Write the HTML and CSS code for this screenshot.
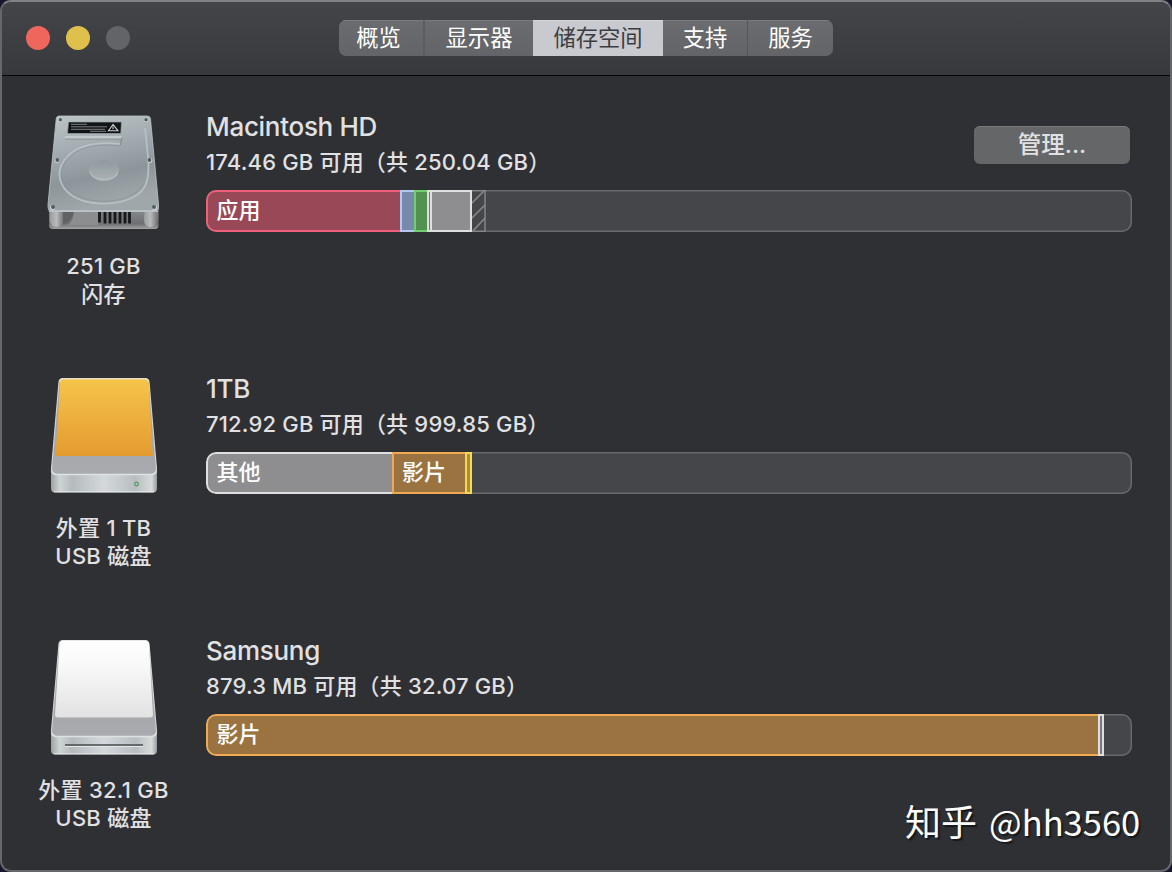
FILE: index.html
```html
<!DOCTYPE html>
<html lang="zh-CN">
<head>
<meta charset="utf-8">
<title>储存空间</title>
<link rel="stylesheet" href="styles.css">
</head>
<body>
<main class="window">
  <header class="titlebar">
    <div class="lights"><i class="light close"></i><i class="light minimize"></i><i class="light zoom"></i></div>
    <nav class="tabs">
      <button class="tab overview">概览</button>
      <button class="tab displays">显示器</button>
      <button class="tab storage active">储存空间</button>
      <button class="tab support">支持</button>
      <button class="tab service">服务</button>
    </nav>
  </header>

  <section class="volume internal">
    <div class="device">
      <svg class="device-icon" viewBox="0 0 130 130" width="130" height="130">
        <defs>
          <linearGradient id="metal" x1="0" y1="0" x2=".25" y2="1"><stop offset="0" stop-color="#bdc5c8"/><stop offset=".35" stop-color="#a5aeb2"/><stop offset=".7" stop-color="#8c969a"/><stop offset="1" stop-color="#a0a7aa"/></linearGradient>
          <linearGradient id="metalFront" x1="0" y1="0" x2="0" y2="1"><stop offset="0" stop-color="#8b8f91"/><stop offset=".75" stop-color="#6d6f71"/><stop offset="1" stop-color="#a1a3a4"/></linearGradient>
          <linearGradient id="post" x1="0" y1="0" x2="1" y2="0"><stop offset="0" stop-color="#9a9d9e"/><stop offset=".5" stop-color="#b8babb"/><stop offset="1" stop-color="#77797b"/></linearGradient>
          <linearGradient id="disc" x1="0" y1="0" x2="0" y2="1"><stop offset="0" stop-color="#8f999d"/><stop offset="1" stop-color="#a8b0b3"/></linearGradient>
        </defs>
        <path d="M9 103H118.500V120Q118.500 124 115 124H13Q9 124 9 120Z" fill="url(#metalFront)"/>
        <path d="M23 107H34Q32 117 23 119Z" fill="#606264"/>
        <path d="M34 107H58V120H28Q34 115 34 107Z" fill="#8b8d8f"/>
        <rect x="10" y="104" width="13" height="18" rx="6" fill="url(#post)"/><rect x="104" y="104" width="13" height="18" rx="6" fill="url(#post)"/>
        <path d="M58 107H91V119H58Z" fill="#747678"/>
        <path d="M59.500 107V117.500M65 107V118.500M70 107V118.500M75 107V118.500M80 107V118.500M85 107V118.500M89.500 107V118.500" stroke="#171819" stroke-width="2.800"/>
        <path d="M19 11Q16.500 11 16.200 14L8 99.500Q7.700 106 11 106.500H115.500Q119.300 106 118.500 99L110.500 14Q110.200 11 107.500 11Z" fill="url(#metal)" stroke="#bcc3c6" stroke-width=".8"/>
        <path d="M8.800 106H118" stroke="#c1c7ca" stroke-width="1.500"/>
        <path d="M81 39C53 36 36 42 27 52C18 61 17 73 24 83C33 95 50 99.500 68 98.500C88 97 101 91 106 79C109 71 109 62 108 52L105 23" fill="none" stroke="#b9c1c4" stroke-width="1.700"/>
        <path d="M80 41C54 38 38 43 29 53C20 62 20 73 26 82C34 92 50 97 68 96C86 95 99 88 104 78" fill="none" stroke="#89949a" stroke-width="1" opacity=".7"/>
        <path d="M82 32L80.500 40" fill="none" stroke="#7c868a"/>
        <path d="M25 31H82L81 34H25Z" fill="#c3cacd"/>
        <path d="M25 34H81" stroke="#7c868a" stroke-width=".8"/>
        <path d="M28.500 17H81.500L80.800 28.500H27.500Z" fill="#111314" stroke="#9aa3a7" stroke-width=".7"/>
        <path d="M31 19.300H47M31 21.800H67M31 24.300H65M50 26.300H66" stroke="#7d8183" stroke-width="1"/>
        <path d="M73 19.500L68.500 25.800H78ZM73 21.500V24.300" fill="none" stroke="#cbd0d2" stroke-width="1.100"/>
        <ellipse cx="64" cy="65.500" rx="14.500" ry="10.300" fill="#b6bec1"/><ellipse cx="64" cy="64.500" rx="14" ry="9.500" fill="url(#disc)"/>
        <g fill="#d2d9dc"><circle cx="20" cy="15" r="2.200"/><circle cx="106" cy="15" r="2.200"/><circle cx="17" cy="55.500" r="2.400"/><circle cx="110" cy="55.500" r="2.400"/><circle cx="12.500" cy="102.500" r="2.500"/><circle cx="114.500" cy="102.500" r="2.500"/></g>
        <g fill="#4d5b61"><circle cx="20.300" cy="14.700" r="1.700"/><circle cx="106" cy="14.700" r="1.700"/><circle cx="17.300" cy="55" r="1.900"/><circle cx="109.500" cy="55" r="1.900"/><circle cx="13" cy="102" r="2"/><circle cx="114" cy="102" r="2"/></g>
      </svg>
      <p class="device-name">251 GB<br>闪存</p>
    </div>
    <div class="details">
      <h2 class="name">Macintosh HD</h2>
      <p class="capacity">174.46 GB 可用（共 250.04 GB）</p>
      <div class="bar">
        <span class="seg apps first" style="width:194px">应用</span><span class="seg mail" style="width:14px"></span><span class="seg messages" style="width:13px"></span><span class="seg photos joined" style="width:3px"></span><span class="seg system" style="width:42px"></span>
        <svg class="purgeable" width="14" height="42" viewBox="0 0 14 42"><path d="M0 13L13 0M0 28L13 15M0 42L13 28" stroke="#838487" stroke-width="1.700"/><path d="M0 .5H14M0 41.500H14M13 0V42" stroke="#858689" stroke-width="1.500"/></svg>
      </div>
    </div>
    <button class="manage">管理...</button>
  </section>

  <section class="volume">
    <div class="device">
      <svg class="device-icon" viewBox="0 0 130 130" width="130" height="130">
        <defs>
          <linearGradient id="orange" x1="0" y1="0" x2="0" y2="1"><stop offset="0" stop-color="#f6c44a"/><stop offset="1" stop-color="#e49b30"/></linearGradient>
          <linearGradient id="topGray" x1="0" y1="0" x2="0" y2="1"><stop offset="0" stop-color="#9b9ea1"/><stop offset="1" stop-color="#a9abae"/></linearGradient>
          <linearGradient id="edge" x1="0" y1="0" x2="1" y2="0"><stop offset="0" stop-color="#9ea2a3"/><stop offset=".08" stop-color="#cfd3d4"/><stop offset=".2" stop-color="#b5bbbd"/><stop offset=".5" stop-color="#d4d8da"/><stop offset=".8" stop-color="#b8bec0"/><stop offset=".95" stop-color="#d7dada"/><stop offset="1" stop-color="#969a9c"/></linearGradient>
        </defs>
        <path d="M11 102H117V118Q117 122.500 113 122.500H15Q11 122.500 11 118Z" fill="url(#edge)"/>
        <path d="M23 8.500Q19.500 8.500 19 12L11.500 99Q11 104.500 16 104.500H112Q117 104.500 116.500 99L109 12Q108.500 8.500 105 8.500Z" fill="url(#topGray)" stroke="#d0d1d1" stroke-width="1.200"/>
        <path d="M23 9H105Q108.300 9 108.600 12L112.700 86H15.500L20 12Q20.200 9 23 9Z" fill="url(#orange)"/>
        <path d="M19.500 12Q20 8.800 23 8.800H105Q108.300 8.800 108.600 12" fill="none" stroke="#eee1c2" stroke-width="1.200"/>
        <path d="M12 101Q13 104.500 17 104.500H111Q115 104.500 116 101" fill="none" stroke="#dfe2e3" stroke-width="1.300"/>
        <path d="M14 121.800H114" stroke="#e6e8e8"/>
        <circle cx="96.500" cy="114" r="1.800" fill="none" stroke="#519b55" stroke-width="1.200"/>
      </svg>
      <p class="device-name">外置 1 TB<br>USB 磁盘</p>
    </div>
    <div class="details">
      <h2 class="name">1TB</h2>
      <p class="capacity">712.92 GB 可用（共 999.85 GB）</p>
      <div class="bar">
        <span class="seg other first" style="width:186px">其他</span><span class="seg movies" style="width:73px">影片</span><span class="seg music" style="width:7px"></span>
      </div>
    </div>
  </section>

  <section class="volume">
    <div class="device">
      <svg class="device-icon" viewBox="0 0 130 130" width="130" height="130">
        <defs><linearGradient id="white" x1="0" y1="0" x2="0" y2="1"><stop offset="0" stop-color="#ffffff"/><stop offset=".3" stop-color="#f9f9f9"/><stop offset="1" stop-color="#e2e2e3"/></linearGradient></defs>
        <path d="M11 102H117V118Q117 122.500 113 122.500H15Q11 122.500 11 118Z" fill="url(#edge)"/>
        <path d="M23 8.500Q19.500 8.500 19 12L11.500 99Q11 104.500 16 104.500H112Q117 104.500 116.500 99L109 12Q108.500 8.500 105 8.500Z" fill="url(#topGray)" stroke="#d0d1d1" stroke-width="1.200"/>
        <path d="M23 8.500H105Q108.700 8.500 109 12L113 83Q113 85.500 110 85.500H18Q15 85.500 15 83L19.500 12Q20 8.500 23 8.500Z" fill="url(#white)"/>
        <path d="M12 101Q13 104.500 17 104.500H111Q115 104.500 116 101" fill="none" stroke="#dfe2e3" stroke-width="1.300"/>
        <path d="M14 121.800H114" stroke="#e6e8e8"/>
        <path d="M25 113H103" stroke="#484b4d" stroke-width="1.600"/><path d="M25 114.500H103" stroke="#e5e7e8"/>
      </svg>
      <p class="device-name">外置 32.1 GB<br>USB 磁盘</p>
    </div>
    <div class="details">
      <h2 class="name">Samsung</h2>
      <p class="capacity">879.3 MB 可用（共 32.07 GB）</p>
      <div class="bar">
        <span class="seg movies first" style="width:892px">影片</span><span class="seg photos" style="width:6px"></span>
      </div>
    </div>
  </section>
  <div class="signature">知乎 <span class="handle">@hh3560</span></div>
</main>
</body>
</html>
```
FILE: styles.css
```css
* { box-sizing: border-box; }
body { margin: 0; background: #17162a; font-family: Inter, "Noto Sans CJK SC", sans-serif; color: #e1e1e3; }
h2, p { margin: 0; }
button { border: 0; padding: 0; font-family: inherit; color: inherit; }
.window { position: relative; width: 1172px; height: 872px; overflow: hidden; border: 2px solid #66676a; border-top-color: #808184; border-radius: 11px; background: #2f3034; }
.titlebar { display: flex; height: 74px; padding: 18px 0 0 24px; border-bottom: 1px solid #050506; background: linear-gradient(#444548, #38393d); }
.lights { display: flex; gap: 16px; width: 313px; padding-top: 6px; }
.light { width: 24px; height: 24px; border-radius: 50%; }
.close { background: #ee665c; }
.minimize { background: #e0c04c; }
.zoom { background: #636467; }
.tabs { display: flex; height: 36px; overflow: hidden; border-radius: 7px; }
.tab { height: 36px; background: linear-gradient(#6b6c6f, #636467); box-shadow: inset 0 1px #7b7c7f; color: #fff; font-size: 22.300px; line-height: 36px; }
.overview { width: 86px; padding-right: 5px; border-right: 2px solid #5b5c5f; }
.displays { width: 108px; }
.storage { width: 130px; }
.support { width: 85px; border-right: 1px solid #56575a; }
.service { width: 85px; }
.tab.active { background: #c9cacf; color: #3c3d41; box-shadow: inset 0 1px #d3d4d8; }
.volume { display: flex; align-items: flex-start; height: 262px; }
.device { width: 204px; padding: 32px 0 0 2px; }
.device-icon { display: block; margin-left: 36px; }
.device-name { width: 199px; text-align: center; font-size: 22px; font-weight: 450; line-height: 28px; letter-spacing: .25px; padding-top: 14px; }
.internal .device { padding-top: 29px; }
.internal .device-name { padding-top: 17px; }
.details { width: 926px; padding-top: 34px; }
.name { height: 34px; font-weight: 450; font-size: 26px; line-height: 34px; letter-spacing: -.3px; white-space: nowrap; }
.capacity { height: 36px; font-size: 22px; font-weight: 450; line-height: 36px; letter-spacing: .18px; white-space: nowrap; }
.bar { display: flex; height: 42px; margin-top: 10px; overflow: hidden; border-radius: 10px; background: #454649; box-shadow: inset 0 0 0 1.500px #68696c; }
.seg { flex: none; height: 42px; overflow: hidden; border: 2px solid; color: #fff; font-size: 22px; font-weight: 500; line-height: 36px; padding-left: 8px; white-space: nowrap; }
.first { border-radius: 10px 0 0 10px; padding-left: 8.500px; border-right-width: 0; }
.seg:empty { padding: 0; }
.apps { background: #994857; border-color: #f0607a; }
.mail { background: #788aaa; border-color: #b0c8f2; border-right-width: 0; }
.messages { background: #529150; border-color: #73cf70; border-right-width: 0; }
.photos { background: #78797b; border-color: #dfdfe2; }
.joined { border-right-width: 0; }
.system { background: #8e8e90; border-color: #dfdfe1; }
.other { background: #8e8e90; border-color: #dfdfe1; }
.movies { background: #9b7340; border-color: #f0a950; }
.movies:not(.first) { border-right-width: 0; }
.music { background: #a6903d; border-color: #f4db53; }
.purgeable { flex: none; }
.manage { position: absolute; left: 972px; top: 124px; width: 156px; height: 38px; border-radius: 6px; background: #656668; box-shadow: inset 0 1px #77787a; font-size: 23.500px; font-weight: 450; line-height: 36px; }
.signature { position: absolute; left: 903px; top: 793px; color: #fff; font: 36px/50px "Noto Sans CJK SC", sans-serif; white-space: nowrap; text-shadow: 2px 2px 1px #18191b; }
.handle { margin-left: 4px; font-size: 34.500px; }
```
